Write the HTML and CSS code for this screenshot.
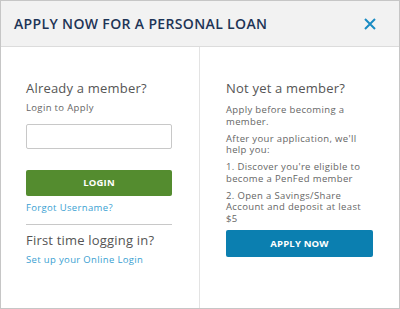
FILE: index.html
```html
<!DOCTYPE html>
<html lang="en">
<head>
    <meta charset="UTF-8">
    <meta name="viewport" content="width=device-width, initial-scale=1.0">
    <title>Apply Now for a Personal Loan</title>
    <link rel="stylesheet" href="styles.css">
</head>
<body>
    <div class="modal">
        <div class="modal-header">
            <h1>Apply Now for a Personal Loan</h1>
            <span class="close-btn">
                <svg width="12" height="12" viewBox="0 0 12 12">
                    <path d="M1 1 L11 11 M11 1 L1 11" stroke="#1a8bc3" stroke-width="2" fill="none"/>
                </svg>
            </span>
        </div>
        <div class="modal-body">
            <div class="col col-left">
                <h2>Already a member?</h2>
                <p class="small">Login to Apply</p>
                <input type="text" class="login-input">
                <button class="btn btn-login">Login</button>
                <a href="#" class="link">Forgot Username?</a>
                <hr>
                <h2>First time logging in?</h2>
                <a href="#" class="link">Set up your Online Login</a>
            </div>
            <div class="col col-right">
                <h2>Not yet a member?</h2>
                <p>Apply before becoming a member.</p>
                <p>After your application, we'll help you:</p>
                <p>1. Discover you're eligible to become a PenFed member</p>
                <p>2. Open a Savings/Share Account and deposit at least $5</p>
                <button class="btn btn-apply">Apply Now</button>
            </div>
        </div>
    </div>
</body>
</html>
```

FILE: styles.css
```css
body {
    margin: 0;
    font-family: "Open Sans", Arial, sans-serif;
    background-color: #fff;
}
.modal {
    width: 400px;
    height: 309px;
    box-sizing: border-box;
    border: 1px solid #c6c6c6;
    display: flex;
    flex-direction: column;
}
.modal-header {
    height: 45px;
    background-color: #f2f2f2;
    border-bottom: 1px solid #dcdcdc;
    display: flex;
    align-items: center;
    justify-content: space-between;
    padding: 0 23px 0 13px;
}
.modal-header h1 {
    margin: 0;
    font-size: 14px;
    font-weight: 600;
    text-transform: uppercase;
    letter-spacing: 0.35px;
    color: #1d3456;
}
.close-btn {
    display: flex;
    cursor: pointer;
}
.modal-body {
    flex: 1;
    display: flex;
}
.col {
    box-sizing: border-box;
    width: 199px;
    padding-top: 32px;
    color: #555;
}
.col-left {
    border-right: 1px solid #e3e3e3;
    padding-left: 25px;
    padding-right: 27px;
}
.col-right {
    padding-left: 26px;
    padding-right: 26px;
}
.col h2 {
    margin: 0 0 5px;
    font-size: 13px;
    font-weight: 400;
    line-height: 18px;
    letter-spacing: 0.2px;
    color: #555;
}
.col p {
    margin: 0 0 5.5px;
    font-size: 9.5px;
    line-height: 11.5px;
    letter-spacing: 0.35px;
    color: #666;
}
.col-right h2 {
    margin-bottom: 7px;
}
.col-left .small {
    margin-bottom: 10px;
}
.login-input {
    display: block;
    width: 100%;
    height: 25px;
    box-sizing: border-box;
    border: 1px solid #c8c8c8;
    border-radius: 2px;
    margin-bottom: 21px;
}
.btn {
    display: block;
    width: 100%;
    border: none;
    border-radius: 2px;
    color: #fff;
    font-family: "Open Sans", Arial, sans-serif;
    font-size: 9.5px;
    font-weight: 700;
    letter-spacing: 0.2px;
    text-transform: uppercase;
    cursor: pointer;
}
.btn-login {
    height: 26px;
    background-color: #548c2f;
}
.btn-apply {
    height: 27px;
    margin-top: 5px;
    background-color: #0b7fb0;
}
.link {
    display: block;
    font-size: 9.5px;
    line-height: 11px;
    letter-spacing: 0.35px;
    color: #3a9fd2;
    text-decoration: none;
}
.col-left .btn-login {
    margin-bottom: 6px;
}
.col-left hr {
    border: none;
    border-top: 1px solid #c8c8c8;
    margin: 11px 0 6px;
}
```
